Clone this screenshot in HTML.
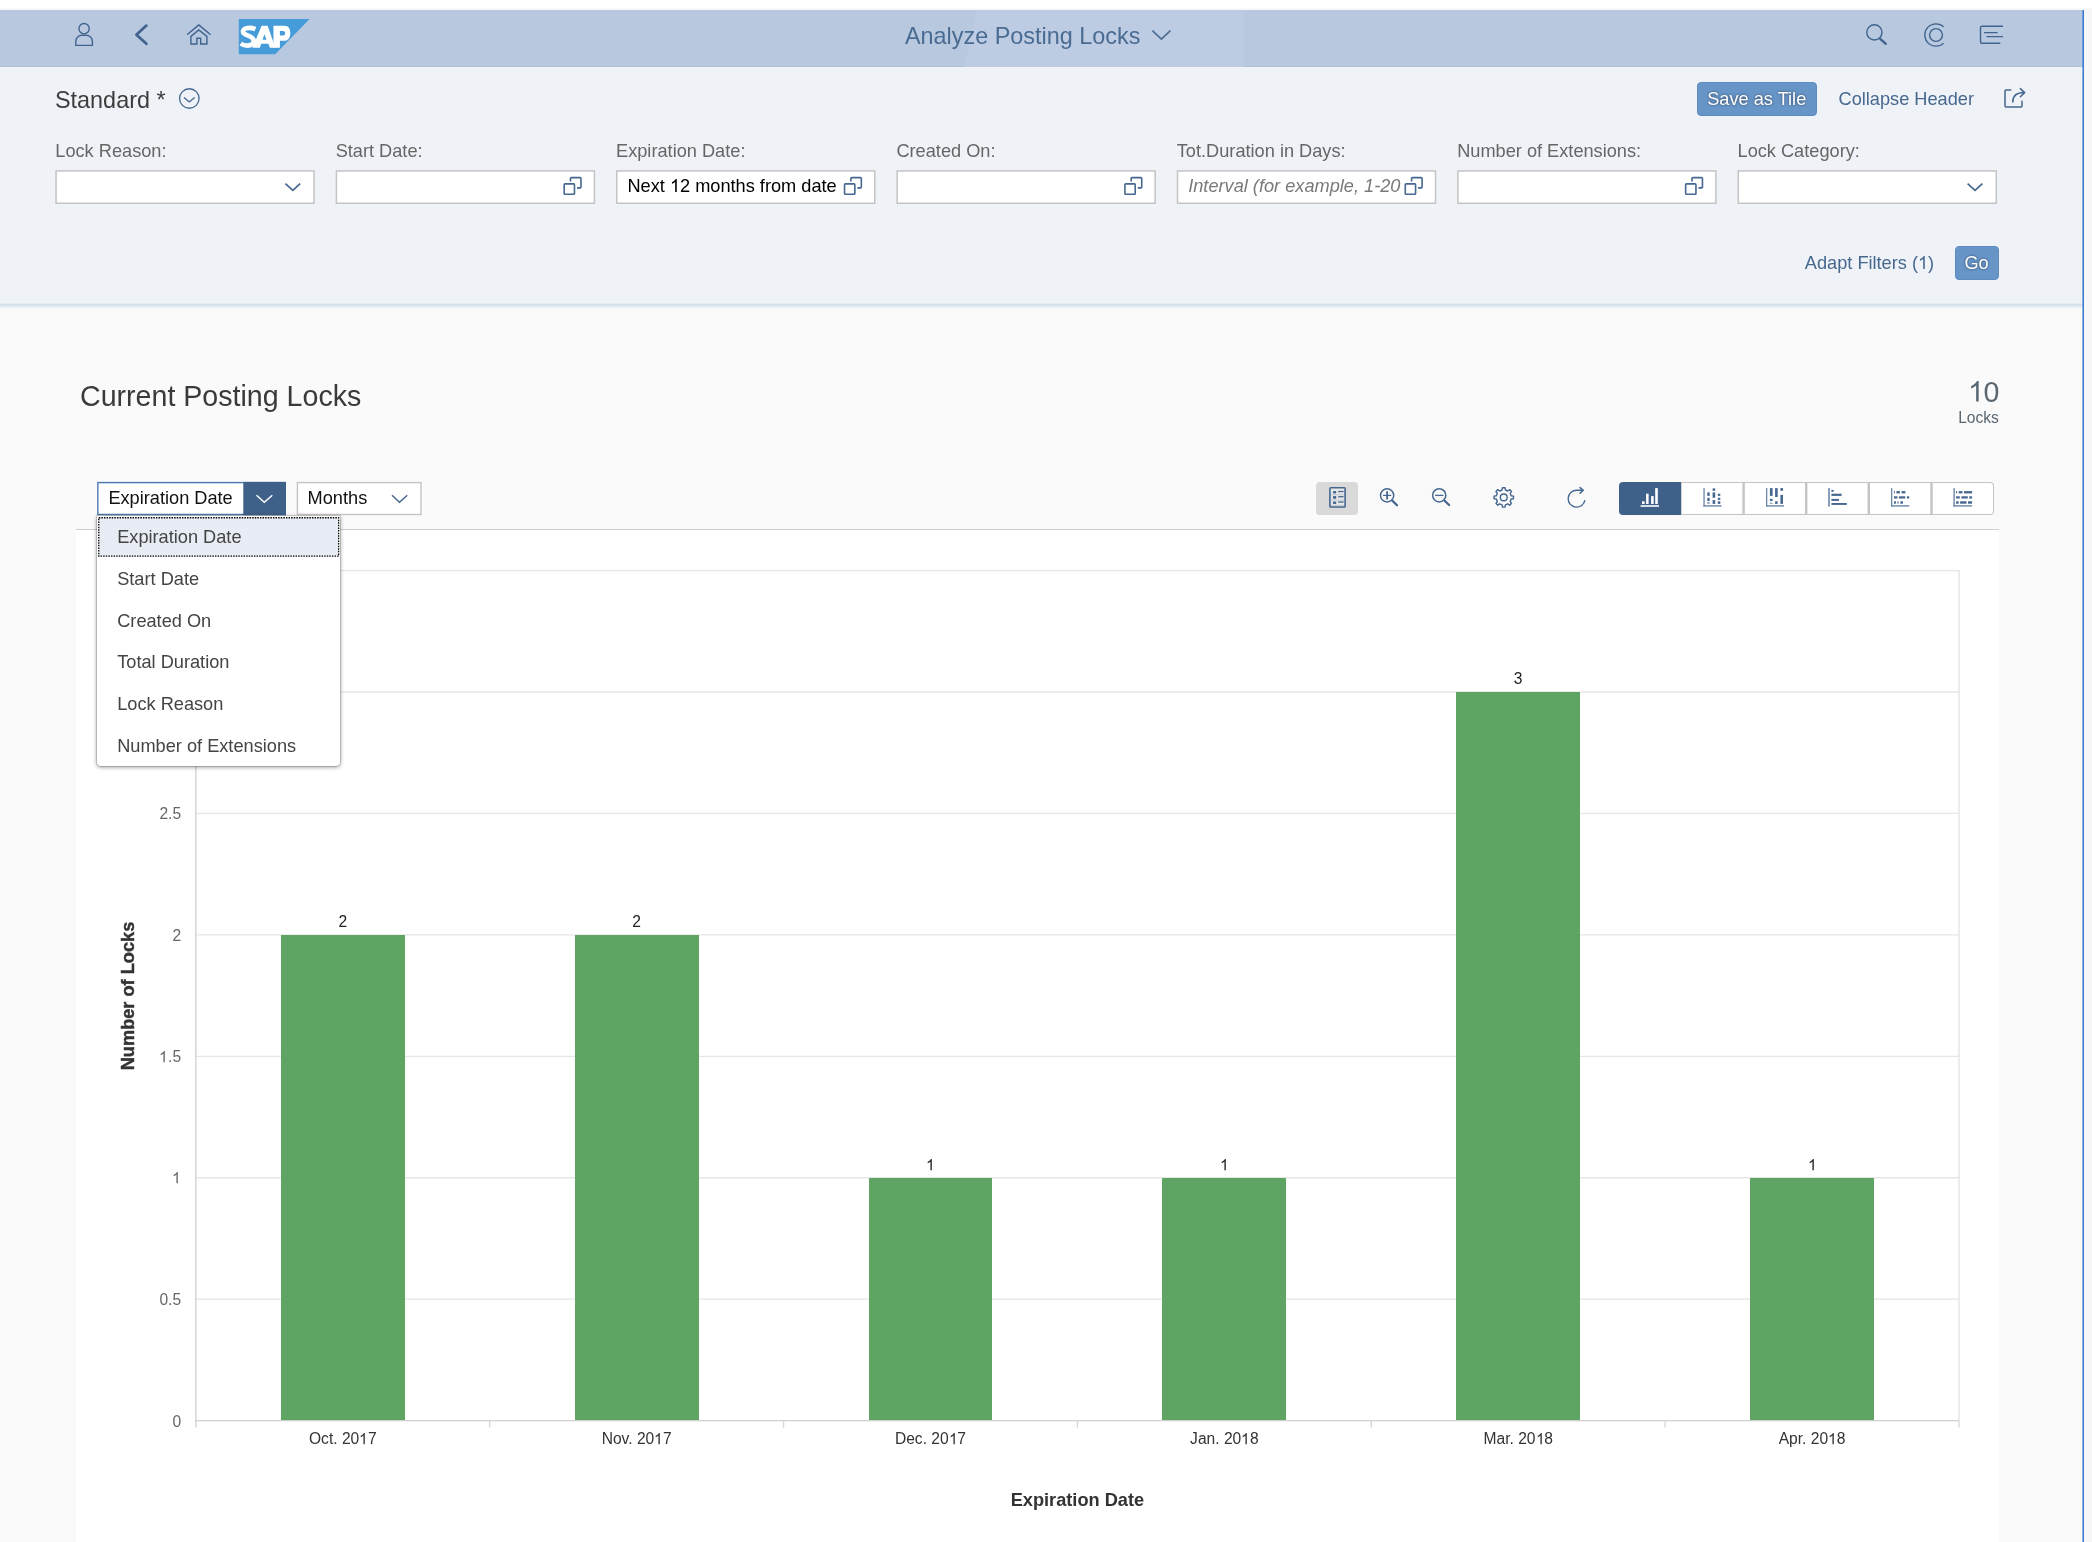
<!DOCTYPE html>
<html><head><meta charset="utf-8"><title>Analyze Posting Locks</title>
<style>
html,body{margin:0;padding:0;overflow:hidden;}
html{width:2092px;height:1542px;}
body{width:2092px;height:1542px;overflow:hidden;position:relative;background:#f7f7f7;font-family:"Liberation Sans", sans-serif;}
.t{position:absolute;white-space:nowrap;font-family:"Liberation Sans", sans-serif;}
.b{position:absolute;box-sizing:border-box;}
svg{overflow:visible;}
</style></head><body><div id="root" style="position:absolute;left:0;top:0;width:2092px;height:1542px;will-change:transform;overflow:hidden;">
<div class="b" style="left:0.00px;top:0.00px;width:2092.00px;height:10.00px;background:linear-gradient(#fff 0,#fff 7.5px,#f4f4f4 10px);"></div>
<div class="b" style="left:0.00px;top:10.00px;width:2083.00px;height:57.00px;background:#b7c8df;"></div>
<div class="b" style="left:0.00px;top:66.00px;width:2083.00px;height:1.00px;background:rgba(120,150,190,.18);"></div>
<div class="b" style="left:964.00px;top:10.00px;width:279.50px;height:57.00px;background:#bdcce2;clip-path:polygon(13px 0,100% 0,100% 100%,0 100%);"></div>
<div class="b" style="left:0.00px;top:67.00px;width:2083.00px;height:241.40px;background:#eff2f7;"></div>
<div class="b" style="left:0.00px;top:308.00px;width:2083.00px;height:1234.00px;background:linear-gradient(#eff2f7 0,#fafafa 1px);"></div>
<div class="b" style="left:0.00px;top:303.00px;width:2083.00px;height:4.00px;background:linear-gradient(rgba(213,224,237,0) 0,#d9e3ee 1px,#d5e0ed 2px,#dbe4ef 3px,rgba(213,224,237,0) 4px);"></div>
<div class="b" style="left:2084.00px;top:8.00px;width:8.00px;height:1534.00px;background:#f7f7f7;"></div>
<div class="b" style="left:2082.00px;top:10.00px;width:1.00px;height:1532.00px;background:rgba(59,122,211,.55);"></div>
<div class="b" style="left:2083.00px;top:10.00px;width:1.00px;height:1532.00px;background:#3b7ad3;"></div>
<div class="t" style="left:905.00px;top:25.00px;font-size:23.4px;line-height:23.4px;color:#4a6b92;font-weight:400;font-style:normal;">Analyze Posting Locks</div>
<div class="t" style="left:55.00px;top:89.00px;font-size:23.4px;line-height:23.4px;color:#3d3d3d;font-weight:400;font-style:normal;">Standard *</div>
<div class="b" style="left:1697.00px;top:81.70px;width:120.00px;height:33.90px;background:#6795c8;border:1px solid #5d8cc2;border-radius:4px;"></div>
<div class="t" style="left:1707.20px;top:90.00px;font-size:18.2px;line-height:18.2px;color:#fff;font-weight:400;font-style:normal;text-shadow:0 0 2.6px rgba(0,0,0,.6);">Save as Tile</div>
<div class="t" style="left:1838.50px;top:90.00px;font-size:18.2px;line-height:18.2px;color:#47688f;font-weight:400;font-style:normal;">Collapse Header</div>
<div class="t" style="left:55.30px;top:142.00px;font-size:18.2px;line-height:18.2px;color:#666666;font-weight:400;font-style:normal;">Lock Reason:</div>
<svg class="b" style="left:0;top:0" width="2092" height="300"><rect x="56.05" y="170.95" width="258" height="32.3" fill="#fff" stroke="#c4c4c4" stroke-width="1.5"/></svg>
<div class="t" style="left:335.67px;top:142.00px;font-size:18.2px;line-height:18.2px;color:#666666;font-weight:400;font-style:normal;">Start Date:</div>
<svg class="b" style="left:0;top:0" width="2092" height="300"><rect x="336.42" y="170.95" width="258" height="32.3" fill="#fff" stroke="#c4c4c4" stroke-width="1.5"/></svg>
<div class="t" style="left:616.04px;top:142.00px;font-size:18.2px;line-height:18.2px;color:#666666;font-weight:400;font-style:normal;">Expiration Date:</div>
<svg class="b" style="left:0;top:0" width="2092" height="300"><rect x="616.79" y="170.95" width="258" height="32.3" fill="#fff" stroke="#c4c4c4" stroke-width="1.5"/></svg>
<div class="t" style="left:896.41px;top:142.00px;font-size:18.2px;line-height:18.2px;color:#666666;font-weight:400;font-style:normal;">Created On:</div>
<svg class="b" style="left:0;top:0" width="2092" height="300"><rect x="897.16" y="170.95" width="258" height="32.3" fill="#fff" stroke="#c4c4c4" stroke-width="1.5"/></svg>
<div class="t" style="left:1176.78px;top:142.00px;font-size:18.2px;line-height:18.2px;color:#666666;font-weight:400;font-style:normal;">Tot.Duration in Days:</div>
<svg class="b" style="left:0;top:0" width="2092" height="300"><rect x="1177.53" y="170.95" width="258" height="32.3" fill="#fff" stroke="#c4c4c4" stroke-width="1.5"/></svg>
<div class="t" style="left:1457.15px;top:142.00px;font-size:18.2px;line-height:18.2px;color:#666666;font-weight:400;font-style:normal;">Number of Extensions:</div>
<svg class="b" style="left:0;top:0" width="2092" height="300"><rect x="1457.90" y="170.95" width="258" height="32.3" fill="#fff" stroke="#c4c4c4" stroke-width="1.5"/></svg>
<div class="t" style="left:1737.52px;top:142.00px;font-size:18.2px;line-height:18.2px;color:#666666;font-weight:400;font-style:normal;">Lock Category:</div>
<svg class="b" style="left:0;top:0" width="2092" height="300"><rect x="1738.27" y="170.95" width="258" height="32.3" fill="#fff" stroke="#c4c4c4" stroke-width="1.5"/></svg>
<div class="t" style="left:627.44px;top:177.00px;font-size:18.2px;line-height:18.2px;color:#000;font-weight:400;font-style:normal;">Next <svg style="display:inline-block;width:0.5562em;height:0.71875em;vertical-align:baseline;overflow:visible" viewBox="0 -1472 1139 1472"><path transform="scale(1,-1)" d="M763 0h-180v1147q-65 -62 -170.5 -124t-189.5 -93v174q151 71 264 172t160 196h116v-1472z" fill="currentColor"/></svg>2 months from date</div>
<div class="b" style="left:1188.18px;top:172px;width:212.8px;height:30px;overflow:hidden;"><div class="t" style="left:0;top:5px;font-size:18.2px;line-height:18.2px;color:#7a7a7a;font-style:italic;">Interval (for example, 1-200)</div></div>
<div class="t" style="left:1804.80px;top:254.00px;font-size:18.2px;line-height:18.2px;color:#47688f;font-weight:400;font-style:normal;">Adapt Filters (<svg style="display:inline-block;width:0.5562em;height:0.71875em;vertical-align:baseline;overflow:visible" viewBox="0 -1472 1139 1472"><path transform="scale(1,-1)" d="M763 0h-180v1147q-65 -62 -170.5 -124t-189.5 -93v174q151 71 264 172t160 196h116v-1472z" fill="currentColor"/></svg>)</div>
<div class="b" style="left:1955.00px;top:246.00px;width:44.20px;height:33.90px;background:#6795c8;border:1px solid #5d8cc2;border-radius:4px;"></div>
<div class="t" style="left:1964.40px;top:254.00px;font-size:18.2px;line-height:18.2px;color:#fff;font-weight:400;font-style:normal;text-shadow:0 0 2.6px rgba(0,0,0,.6);">Go</div>
<div class="t" style="left:80.00px;top:382.00px;font-size:28.6px;line-height:28.6px;color:#3a3a3a;font-weight:400;font-style:normal;">Current Posting Locks</div>
<div class="t" style="right:92.60px;top:378.00px;font-size:28.6px;line-height:28.6px;color:#5a6670;font-weight:400;font-style:normal;"><svg style="display:inline-block;width:0.5562em;height:0.71875em;vertical-align:baseline;overflow:visible" viewBox="0 -1472 1139 1472"><path transform="scale(1,-1)" d="M763 0h-180v1147q-65 -62 -170.5 -124t-189.5 -93v174q151 71 264 172t160 196h116v-1472z" fill="currentColor"/></svg>0</div>
<div class="t" style="right:93.10px;top:410.00px;font-size:15.6px;line-height:15.6px;color:#5a6670;font-weight:400;font-style:normal;">Locks</div>
<div class="b" style="left:76.00px;top:528.60px;width:1923.00px;height:1014.00px;background:#fff;border-top:1.3px solid #cfcfcf;"></div>
<svg class="b" style="left:0;top:0" width="2092" height="1542" viewBox="0 0 2092 1542"><line x1="195.85" y1="1299.17" x2="1959.00" y2="1299.17" stroke="#e6e6e6" stroke-width="1.3"/><line x1="195.85" y1="1177.74" x2="1959.00" y2="1177.74" stroke="#e6e6e6" stroke-width="1.3"/><line x1="195.85" y1="1056.31" x2="1959.00" y2="1056.31" stroke="#e6e6e6" stroke-width="1.3"/><line x1="195.85" y1="934.88" x2="1959.00" y2="934.88" stroke="#e6e6e6" stroke-width="1.3"/><line x1="195.85" y1="813.45" x2="1959.00" y2="813.45" stroke="#e6e6e6" stroke-width="1.3"/><line x1="195.85" y1="692.02" x2="1959.00" y2="692.02" stroke="#e6e6e6" stroke-width="1.3"/><line x1="195.85" y1="570.59" x2="1959.00" y2="570.59" stroke="#e6e6e6" stroke-width="1.3"/><line x1="1959.00" y1="569.94" x2="1959.00" y2="1420.60" stroke="#e2e2e2" stroke-width="1.3"/><line x1="195.85" y1="569.94" x2="195.85" y2="1427.60" stroke="#d0d0d0" stroke-width="1.3"/><line x1="195.85" y1="1420.60" x2="1959.00" y2="1420.60" stroke="#d0d0d0" stroke-width="1.3"/><line x1="489.71" y1="1420.60" x2="489.71" y2="1427.60" stroke="#d6d6d6" stroke-width="1.3"/><line x1="783.57" y1="1420.60" x2="783.57" y2="1427.60" stroke="#d6d6d6" stroke-width="1.3"/><line x1="1077.42" y1="1420.60" x2="1077.42" y2="1427.60" stroke="#d6d6d6" stroke-width="1.3"/><line x1="1371.28" y1="1420.60" x2="1371.28" y2="1427.60" stroke="#d6d6d6" stroke-width="1.3"/><line x1="1665.14" y1="1420.60" x2="1665.14" y2="1427.60" stroke="#d6d6d6" stroke-width="1.3"/><line x1="1959.00" y1="1420.60" x2="1959.00" y2="1427.60" stroke="#d6d6d6" stroke-width="1.3"/></svg>
<div class="t" style="right:1910.90px;top:1414.00px;font-size:15.6px;line-height:15.6px;color:#666;font-weight:400;font-style:normal;">0</div>
<div class="t" style="right:1910.90px;top:1292.00px;font-size:15.6px;line-height:15.6px;color:#666;font-weight:400;font-style:normal;">0.5</div>
<div class="t" style="right:1910.90px;top:1170.00px;font-size:15.6px;line-height:15.6px;color:#666;font-weight:400;font-style:normal;"><svg style="display:inline-block;width:0.5562em;height:0.71875em;vertical-align:baseline;overflow:visible" viewBox="0 -1472 1139 1472"><path transform="scale(1,-1)" d="M763 0h-180v1147q-65 -62 -170.5 -124t-189.5 -93v174q151 71 264 172t160 196h116v-1472z" fill="currentColor"/></svg></div>
<div class="t" style="right:1910.90px;top:1049.00px;font-size:15.6px;line-height:15.6px;color:#666;font-weight:400;font-style:normal;"><svg style="display:inline-block;width:0.5562em;height:0.71875em;vertical-align:baseline;overflow:visible" viewBox="0 -1472 1139 1472"><path transform="scale(1,-1)" d="M763 0h-180v1147q-65 -62 -170.5 -124t-189.5 -93v174q151 71 264 172t160 196h116v-1472z" fill="currentColor"/></svg>.5</div>
<div class="t" style="right:1910.90px;top:928.00px;font-size:15.6px;line-height:15.6px;color:#666;font-weight:400;font-style:normal;">2</div>
<div class="t" style="right:1910.90px;top:806.00px;font-size:15.6px;line-height:15.6px;color:#666;font-weight:400;font-style:normal;">2.5</div>
<div class="b" style="left:280.83px;top:935.28px;width:123.90px;height:484.67px;background:#5ea463;"></div>
<div class="t" style="left:-157.22px;width:1000px;text-align:center;top:914.00px;font-size:15.6px;line-height:15.6px;color:#222;font-weight:400;font-style:normal;">2</div>
<div class="t" style="left:-157.22px;width:1000px;text-align:center;top:1431.00px;font-size:15.6px;line-height:15.6px;color:#333;font-weight:400;font-style:normal;">Oct. 20<svg style="display:inline-block;width:0.5562em;height:0.71875em;vertical-align:baseline;overflow:visible" viewBox="0 -1472 1139 1472"><path transform="scale(1,-1)" d="M763 0h-180v1147q-65 -62 -170.5 -124t-189.5 -93v174q151 71 264 172t160 196h116v-1472z" fill="currentColor"/></svg>7</div>
<div class="b" style="left:574.69px;top:935.28px;width:123.90px;height:484.67px;background:#5ea463;"></div>
<div class="t" style="left:136.64px;width:1000px;text-align:center;top:914.00px;font-size:15.6px;line-height:15.6px;color:#222;font-weight:400;font-style:normal;">2</div>
<div class="t" style="left:136.64px;width:1000px;text-align:center;top:1431.00px;font-size:15.6px;line-height:15.6px;color:#333;font-weight:400;font-style:normal;">Nov. 20<svg style="display:inline-block;width:0.5562em;height:0.71875em;vertical-align:baseline;overflow:visible" viewBox="0 -1472 1139 1472"><path transform="scale(1,-1)" d="M763 0h-180v1147q-65 -62 -170.5 -124t-189.5 -93v174q151 71 264 172t160 196h116v-1472z" fill="currentColor"/></svg>7</div>
<div class="b" style="left:868.55px;top:1178.14px;width:123.90px;height:241.81px;background:#5ea463;"></div>
<div class="t" style="left:430.50px;width:1000px;text-align:center;top:1157.00px;font-size:15.6px;line-height:15.6px;color:#222;font-weight:400;font-style:normal;"><svg style="display:inline-block;width:0.5562em;height:0.71875em;vertical-align:baseline;overflow:visible" viewBox="0 -1472 1139 1472"><path transform="scale(1,-1)" d="M763 0h-180v1147q-65 -62 -170.5 -124t-189.5 -93v174q151 71 264 172t160 196h116v-1472z" fill="currentColor"/></svg></div>
<div class="t" style="left:430.50px;width:1000px;text-align:center;top:1431.00px;font-size:15.6px;line-height:15.6px;color:#333;font-weight:400;font-style:normal;">Dec. 20<svg style="display:inline-block;width:0.5562em;height:0.71875em;vertical-align:baseline;overflow:visible" viewBox="0 -1472 1139 1472"><path transform="scale(1,-1)" d="M763 0h-180v1147q-65 -62 -170.5 -124t-189.5 -93v174q151 71 264 172t160 196h116v-1472z" fill="currentColor"/></svg>7</div>
<div class="b" style="left:1162.40px;top:1178.14px;width:123.90px;height:241.81px;background:#5ea463;"></div>
<div class="t" style="left:724.35px;width:1000px;text-align:center;top:1157.00px;font-size:15.6px;line-height:15.6px;color:#222;font-weight:400;font-style:normal;"><svg style="display:inline-block;width:0.5562em;height:0.71875em;vertical-align:baseline;overflow:visible" viewBox="0 -1472 1139 1472"><path transform="scale(1,-1)" d="M763 0h-180v1147q-65 -62 -170.5 -124t-189.5 -93v174q151 71 264 172t160 196h116v-1472z" fill="currentColor"/></svg></div>
<div class="t" style="left:724.35px;width:1000px;text-align:center;top:1431.00px;font-size:15.6px;line-height:15.6px;color:#333;font-weight:400;font-style:normal;">Jan. 20<svg style="display:inline-block;width:0.5562em;height:0.71875em;vertical-align:baseline;overflow:visible" viewBox="0 -1472 1139 1472"><path transform="scale(1,-1)" d="M763 0h-180v1147q-65 -62 -170.5 -124t-189.5 -93v174q151 71 264 172t160 196h116v-1472z" fill="currentColor"/></svg>8</div>
<div class="b" style="left:1456.26px;top:692.42px;width:123.90px;height:727.53px;background:#5ea463;"></div>
<div class="t" style="left:1018.21px;width:1000px;text-align:center;top:671.00px;font-size:15.6px;line-height:15.6px;color:#222;font-weight:400;font-style:normal;">3</div>
<div class="t" style="left:1018.21px;width:1000px;text-align:center;top:1431.00px;font-size:15.6px;line-height:15.6px;color:#333;font-weight:400;font-style:normal;">Mar. 20<svg style="display:inline-block;width:0.5562em;height:0.71875em;vertical-align:baseline;overflow:visible" viewBox="0 -1472 1139 1472"><path transform="scale(1,-1)" d="M763 0h-180v1147q-65 -62 -170.5 -124t-189.5 -93v174q151 71 264 172t160 196h116v-1472z" fill="currentColor"/></svg>8</div>
<div class="b" style="left:1750.12px;top:1178.14px;width:123.90px;height:241.81px;background:#5ea463;"></div>
<div class="t" style="left:1312.07px;width:1000px;text-align:center;top:1157.00px;font-size:15.6px;line-height:15.6px;color:#222;font-weight:400;font-style:normal;"><svg style="display:inline-block;width:0.5562em;height:0.71875em;vertical-align:baseline;overflow:visible" viewBox="0 -1472 1139 1472"><path transform="scale(1,-1)" d="M763 0h-180v1147q-65 -62 -170.5 -124t-189.5 -93v174q151 71 264 172t160 196h116v-1472z" fill="currentColor"/></svg></div>
<div class="t" style="left:1312.07px;width:1000px;text-align:center;top:1431.00px;font-size:15.6px;line-height:15.6px;color:#333;font-weight:400;font-style:normal;">Apr. 20<svg style="display:inline-block;width:0.5562em;height:0.71875em;vertical-align:baseline;overflow:visible" viewBox="0 -1472 1139 1472"><path transform="scale(1,-1)" d="M763 0h-180v1147q-65 -62 -170.5 -124t-189.5 -93v174q151 71 264 172t160 196h116v-1472z" fill="currentColor"/></svg>8</div>
<div class="t" style="left:577.42px;width:1000px;text-align:center;top:1491.00px;font-size:18.2px;line-height:18.2px;color:#333;font-weight:700;font-style:normal;">Expiration Date</div>
<div class="t" style="left:-366.00px;top:995.50px;width:1000px;height:0;"><div style="position:absolute;left:500px;top:0;transform:rotate(-90deg);transform-origin:0 0;"><div class="t" style="left:-500px;width:1000px;text-align:center;top:-15.41px;font-size:18.2px;line-height:18.2px;font-weight:700;color:#333;-webkit-text-stroke:0.45px #333;">Number of Locks</div></div></div>
<svg class="b" style="left:0;top:0" width="2092" height="600"><rect x="97.85" y="482.6" width="187.4" height="31.9" fill="#fff" stroke="#4a78b0" stroke-width="1.4"/></svg>
<svg class="b" style="left:0;top:0" width="2092" height="600"><rect x="243.3" y="481.9" width="42.65" height="33.3" fill="#3f6089"/></svg>
<div class="t" style="left:108.40px;top:489.00px;font-size:18.2px;line-height:18.2px;color:#111;font-weight:400;font-style:normal;">Expiration Date</div>
<svg class="b" style="left:0;top:0" width="2092" height="600"><rect x="297.4" y="482.6" width="123.6" height="31.9" fill="#fff" stroke="#c4c4c4" stroke-width="1.4"/></svg>
<div class="t" style="left:307.60px;top:489.00px;font-size:18.2px;line-height:18.2px;color:#111;font-weight:400;font-style:normal;">Months</div>
<div class="b" style="left:1316.30px;top:482.00px;width:41.40px;height:32.80px;background:#d9d9d9;border-radius:4px;"></div>
<div class="b" style="left:1680.00px;top:482.00px;width:313.60px;height:33.40px;background:#fff;border:1.3px solid #c4c4c4;border-left:none;border-radius:0 4px 4px 0;"></div>
<div class="b" style="left:1618.60px;top:482.00px;width:62.60px;height:33.40px;background:#3f6089;border-radius:4px 0 0 4px;"></div>
<div class="b" style="left:1681.00px;top:483.00px;width:1.30px;height:31.40px;background:#d2d2d2;"></div>
<svg class="b" style="left:0;top:0" width="2092" height="600"><rect x="1742.40" y="482.6" width="2.4" height="32.2" fill="#c4c4c4"/></svg>
<svg class="b" style="left:0;top:0" width="2092" height="600"><rect x="1805.00" y="482.6" width="2.4" height="32.2" fill="#c4c4c4"/></svg>
<svg class="b" style="left:0;top:0" width="2092" height="600"><rect x="1867.60" y="482.6" width="2.4" height="32.2" fill="#c4c4c4"/></svg>
<svg class="b" style="left:0;top:0" width="2092" height="600"><rect x="1930.30" y="482.6" width="2.4" height="32.2" fill="#c4c4c4"/></svg>
<div class="b" style="left:97.00px;top:516.20px;width:243.40px;height:249.60px;background:#fff;border-radius:0 0 4px 4px;box-shadow:0 1px 4px rgba(0,0,0,.45), 0 0 0 1px rgba(0,0,0,.12);"></div>
<div class="b" style="left:98.60px;top:517.60px;width:240.20px;height:38.60px;background:#e8ecf5;"></div>
<div class="t" style="left:117.20px;top:528.00px;font-size:18.2px;line-height:18.2px;color:#444;font-weight:400;font-style:normal;">Expiration Date</div>
<div class="t" style="left:117.20px;top:570.00px;font-size:18.2px;line-height:18.2px;color:#444;font-weight:400;font-style:normal;">Start Date</div>
<div class="t" style="left:117.20px;top:612.00px;font-size:18.2px;line-height:18.2px;color:#444;font-weight:400;font-style:normal;">Created On</div>
<div class="t" style="left:117.20px;top:653.00px;font-size:18.2px;line-height:18.2px;color:#444;font-weight:400;font-style:normal;">Total Duration</div>
<div class="t" style="left:117.20px;top:695.00px;font-size:18.2px;line-height:18.2px;color:#444;font-weight:400;font-style:normal;">Lock Reason</div>
<div class="t" style="left:117.20px;top:737.00px;font-size:18.2px;line-height:18.2px;color:#444;font-weight:400;font-style:normal;">Number of Extensions</div>
<svg class="b" style="left:0;top:0;pointer-events:none" width="2092" height="1542" viewBox="0 0 2092 1542"><circle cx="84.1" cy="28.7" r="5.15" stroke="#41638d" stroke-width="1.4" fill="none"/><path d="M75.8,45.4 V41.5 C75.8,37.6 78.8,35.3 82,35.3 H86.2 C89.4,35.3 92.4,37.6 92.4,41.5 V45.4 Z" stroke="#41638d" stroke-width="1.4" fill="none" stroke-linecap="round" stroke-linejoin="round" /><path d="M146.4,25.6 L136.4,34.8 L146.4,43.8" stroke="#41638d" stroke-width="2.7" fill="none" stroke-linecap="round" stroke-linejoin="round" /><path d="M187.6,34.3 L198.8,24.9 L210,34.3" stroke="#41638d" stroke-width="1.4" fill="none" stroke-linecap="round" stroke-linejoin="round" /><path d="M190.9,36 V44 H196.9 V38.3 H200.7 V44 H206.9 V36 M190.9,36.4 L198.8,29.9 L206.9,36.4" stroke="#41638d" stroke-width="1.4" fill="none" stroke-linecap="butt" stroke-linejoin="miter" /><polygon points="238.8,19.1 309.6,19.1 275.2,54.2 238.8,54.2" fill="#459cd8"/><g transform="translate(230,14) scale(0.043022)" fill="#fff"><path d="M590,350 C510,318 420,318 370,335 C290,362 285,430 335,462 C395,500 515,522 545,592 C575,680 490,735 405,735 C340,735 295,718 250,688" fill="none" stroke="#fff" stroke-width="108"/><path fill-rule="evenodd" d="M735,275 H875 L1055,785 H925 L893,690 H727 L692,785 H520 Z M800,468 L757,598 H848 Z"/><path fill-rule="evenodd" d="M1010,275 H1270 C1360,275 1402,350 1402,445 C1402,545 1350,620 1270,620 H1160 V785 H1010 Z M1160,398 V502 H1235 C1265,502 1282,480 1282,450 C1282,420 1265,398 1235,398 Z"/></g><path d="M1152.4,30.6 L1161.4,39.2 L1170.4,30.6" stroke="#4a6b92" stroke-width="1.6" fill="none" stroke-linecap="butt" stroke-linejoin="miter" /><circle cx="1874.4" cy="32.4" r="7.6" stroke="#41638d" stroke-width="1.4" fill="none"/><path d="M1880.2,38.8 L1885.8,43.8" stroke="#41638d" stroke-width="2.3" fill="none" stroke-linecap="round" stroke-linejoin="round" /><circle cx="1936" cy="35" r="6.4" stroke="#41638d" stroke-width="1.4" fill="none"/><path d="M1943.7,26.9 A11.2,11.2 0 1 0 1943.7,43.1" stroke="#41638d" stroke-width="1.3" fill="none" stroke-linecap="butt" stroke-linejoin="round" /><path d="M2003,26.2 H1982 Q1980.5,26.2 1980.5,27.7 V41.8 Q1980.5,43.3 1982,43.3 H2000.3" stroke="#41638d" stroke-width="1.4" fill="none" stroke-linecap="butt" stroke-linejoin="round" /><path d="M1984,32.6 H1997.6 M1986.6,36.6 H2003" stroke="#41638d" stroke-width="1.3" fill="none" stroke-linecap="butt" stroke-linejoin="round" /><circle cx="189.3" cy="98.5" r="9.75" stroke="#456790" stroke-width="1.3" fill="none"/><path d="M184.3,97.8 L189.3,101.9 L194.3,97.8" stroke="#456790" stroke-width="1.3" fill="none" stroke-linecap="round" stroke-linejoin="round" /><path d="M2010.8,90.1 H2006 Q2005,90.1 2005,91.1 V106.1 Q2005,107.1 2006,107.1 H2021 Q2022,107.1 2022,106.1 V101.3" stroke="#456790" stroke-width="1.5" fill="none" stroke-linecap="round" stroke-linejoin="round" /><path d="M2012.8,102 C2012.8,96 2016.5,92.6 2024,92.6 M2020.4,88.6 L2024.6,92.6 L2020.4,96.8" stroke="#456790" stroke-width="1.5" fill="none" stroke-linecap="round" stroke-linejoin="round" /><path d="M285.40,183.7 L292.80,190.3 L300.20,183.7" stroke="#456790" stroke-width="1.7" fill="none" stroke-linecap="butt" stroke-linejoin="miter" /><rect x="564.17" y="183.9" width="10.3" height="10.3" rx="0.8" stroke="#456790" stroke-width="1.6" fill="none"/><path d="M570.47,181.6 V178.40 Q570.47,177.6 571.27,177.6 H580.17 Q580.97,177.6 580.97,178.4 V187.1 Q580.97,187.9 580.17,187.9 H576.97" stroke="#456790" stroke-width="1.6" fill="none" stroke-linecap="butt" stroke-linejoin="round" /><rect x="844.54" y="183.9" width="10.3" height="10.3" rx="0.8" stroke="#456790" stroke-width="1.6" fill="none"/><path d="M850.84,181.6 V178.40 Q850.84,177.6 851.64,177.6 H860.54 Q861.34,177.6 861.34,178.4 V187.1 Q861.34,187.9 860.54,187.9 H857.34" stroke="#456790" stroke-width="1.6" fill="none" stroke-linecap="butt" stroke-linejoin="round" /><rect x="1124.91" y="183.9" width="10.3" height="10.3" rx="0.8" stroke="#456790" stroke-width="1.6" fill="none"/><path d="M1131.21,181.6 V178.40 Q1131.21,177.6 1132.01,177.6 H1140.91 Q1141.71,177.6 1141.71,178.4 V187.1 Q1141.71,187.9 1140.91,187.9 H1137.71" stroke="#456790" stroke-width="1.6" fill="none" stroke-linecap="butt" stroke-linejoin="round" /><rect x="1405.28" y="183.9" width="10.3" height="10.3" rx="0.8" stroke="#456790" stroke-width="1.6" fill="none"/><path d="M1411.58,181.6 V178.40 Q1411.58,177.6 1412.38,177.6 H1421.28 Q1422.08,177.6 1422.08,178.4 V187.1 Q1422.08,187.9 1421.28,187.9 H1418.08" stroke="#456790" stroke-width="1.6" fill="none" stroke-linecap="butt" stroke-linejoin="round" /><rect x="1685.65" y="183.9" width="10.3" height="10.3" rx="0.8" stroke="#456790" stroke-width="1.6" fill="none"/><path d="M1691.95,181.6 V178.40 Q1691.95,177.6 1692.75,177.6 H1701.65 Q1702.45,177.6 1702.45,178.4 V187.1 Q1702.45,187.9 1701.65,187.9 H1698.45" stroke="#456790" stroke-width="1.6" fill="none" stroke-linecap="butt" stroke-linejoin="round" /><path d="M1967.62,183.7 L1975.02,190.3 L1982.42,183.7" stroke="#456790" stroke-width="1.7" fill="none" stroke-linecap="butt" stroke-linejoin="miter" /><path d="M256.5,495.3 L264.3,502.2 L272.3,495.3" stroke="#fff" stroke-width="1.5" fill="none" stroke-linecap="butt" stroke-linejoin="miter" /><path d="M392,495.3 L399.5,502.2 L407.3,495.3" stroke="#456790" stroke-width="1.5" fill="none" stroke-linecap="butt" stroke-linejoin="miter" /><rect x="1329.9" y="487.8" width="15.2" height="19.2" rx="0.8" stroke="#456790" stroke-width="1.6" fill="rgba(255,255,255,.4)"/><rect x="1332.9" y="490.90" width="3.4" height="2.6" rx="1" fill="#456790"/><rect x="1338.2" y="490.90" width="5.4" height="1.3" fill="#456790"/><rect x="1332.9" y="496.10" width="3.4" height="2.6" rx="1" fill="#456790"/><rect x="1338.2" y="496.10" width="5.4" height="1.3" fill="#456790"/><rect x="1332.9" y="501.40" width="3.4" height="2.6" rx="1" fill="#456790"/><rect x="1338.2" y="501.40" width="5.4" height="1.3" fill="#456790"/><rect x="1331" y="494.30" width="13" height="1" fill="#456790" opacity="0.25"/><rect x="1331" y="499.60" width="13" height="1" fill="#456790" opacity="0.25"/><rect x="1331" y="504.80" width="13" height="1" fill="#456790" opacity="0.25"/><circle cx="1387.1" cy="495.4" r="6.6" stroke="#456790" stroke-width="1.5" fill="none"/><path d="M1383,495.4 H1391.2" stroke="#456790" stroke-width="1.2" fill="none" stroke-linecap="butt" stroke-linejoin="round" /><path d="M1387.1,491.2 V499.6" stroke="#456790" stroke-width="1.8" fill="none" stroke-linecap="butt" stroke-linejoin="round" /><path d="M1392.3,500.6 L1397,505.2" stroke="#456790" stroke-width="2.3" fill="none" stroke-linecap="round" stroke-linejoin="round" /><circle cx="1439.2" cy="495.3" r="6.6" stroke="#456790" stroke-width="1.5" fill="none"/><path d="M1435.1,495.4 H1443.4" stroke="#456790" stroke-width="1.3" fill="none" stroke-linecap="butt" stroke-linejoin="round" /><path d="M1444.4,500.5 L1449.1,505" stroke="#456790" stroke-width="2.3" fill="none" stroke-linecap="round" stroke-linejoin="round" /><path d="M1502.09,489.98 L1502.45,487.69 L1505.05,487.69 L1505.41,489.98 L1507.82,490.98 L1509.70,489.61 L1511.54,491.45 L1510.17,493.33 L1511.17,495.74 L1513.46,496.10 L1513.46,498.70 L1511.17,499.06 L1510.17,501.47 L1511.54,503.35 L1509.70,505.19 L1507.82,503.82 L1505.41,504.82 L1505.05,507.11 L1502.45,507.11 L1502.09,504.82 L1499.68,503.82 L1497.80,505.19 L1495.96,503.35 L1497.33,501.47 L1496.33,499.06 L1494.04,498.70 L1494.04,496.10 L1496.33,495.74 L1497.33,493.33 L1495.96,491.45 L1497.80,489.61 L1499.68,490.98 Z" stroke="#456790" stroke-width="1.4" fill="none" stroke-linecap="round" stroke-linejoin="round" /><circle cx="1503.75" cy="497.4" r="3.4" stroke="#456790" stroke-width="1.4" fill="none"/><path d="M1584.92,500.17 A8.45,8.45 0 1 1 1576.60,490.25 H1583" stroke="#456790" stroke-width="1.35" fill="none" stroke-linecap="butt" stroke-linejoin="round" /><path d="M1580.1,487.6 L1583.3,490.3 L1580.1,493.1" stroke="#456790" stroke-width="1.5" fill="none" stroke-linecap="round" stroke-linejoin="round" /><rect x="1640.60" y="505.20" width="18.40" height="1.60" fill="#fff" opacity="1"/><rect x="1642.00" y="501.30" width="2.60" height="2.70" fill="#fff" opacity="1"/><rect x="1646.10" y="493.70" width="2.50" height="10.30" fill="#fff" opacity="1"/><rect x="1651.10" y="496.10" width="2.60" height="7.90" fill="#fff" opacity="1"/><rect x="1655.20" y="488.10" width="2.60" height="15.90" fill="#fff" opacity="1"/><rect x="1703.40" y="488.10" width="1.30" height="18.50" fill="#6a87ab" opacity="1"/><rect x="1703.40" y="505.20" width="18.20" height="1.40" fill="#6a87ab" opacity="1"/><rect x="1707.30" y="492.40" width="2.40" height="3.50" fill="#456790" opacity="1"/><rect x="1707.30" y="497.80" width="2.40" height="3.20" fill="#456790" opacity="1"/><rect x="1707.30" y="502.00" width="2.40" height="1.90" fill="#456790" opacity="0.6"/><rect x="1712.60" y="488.40" width="2.60" height="2.40" fill="#456790" opacity="1"/><rect x="1712.60" y="492.40" width="2.60" height="5.40" fill="#456790" opacity="1"/><rect x="1712.60" y="500.10" width="2.60" height="3.80" fill="#456790" opacity="1"/><rect x="1717.80" y="493.70" width="2.50" height="2.20" fill="#456790" opacity="1"/><rect x="1717.80" y="497.80" width="2.50" height="2.10" fill="#456790" opacity="1"/><rect x="1717.80" y="501.30" width="2.50" height="2.60" fill="#456790" opacity="1"/><rect x="1766.00" y="488.10" width="1.30" height="18.50" fill="#6a87ab" opacity="1"/><rect x="1766.00" y="505.20" width="18.00" height="1.40" fill="#6a87ab" opacity="1"/><rect x="1769.90" y="488.10" width="2.70" height="7.80" fill="#456790" opacity="1"/><rect x="1769.90" y="498.90" width="2.70" height="2.10" fill="#456790" opacity="1"/><rect x="1769.90" y="502.60" width="2.70" height="1.30" fill="#456790" opacity="0.6"/><rect x="1775.10" y="488.10" width="2.60" height="8.90" fill="#456790" opacity="1"/><rect x="1775.10" y="501.30" width="2.60" height="2.60" fill="#456790" opacity="1"/><rect x="1780.40" y="488.10" width="2.60" height="2.70" fill="#456790" opacity="1"/><rect x="1780.40" y="494.90" width="2.60" height="9.00" fill="#456790" opacity="1"/><rect x="1828.20" y="488.10" width="1.60" height="18.50" fill="#6a87ab" opacity="1"/><rect x="1831.40" y="489.90" width="2.30" height="1.90" fill="#456790" opacity="1"/><rect x="1831.40" y="493.70" width="10.20" height="2.20" fill="#456790" opacity="1"/><rect x="1831.40" y="498.90" width="7.60" height="2.00" fill="#456790" opacity="1"/><rect x="1831.40" y="503.00" width="15.40" height="1.90" fill="#456790" opacity="1"/><rect x="1891.00" y="488.10" width="1.30" height="18.50" fill="#6a87ab" opacity="1"/><rect x="1891.00" y="505.20" width="18.20" height="1.40" fill="#6a87ab" opacity="1"/><rect x="1894.00" y="491.10" width="0.90" height="2.30" fill="#456790" opacity="1"/><rect x="1896.40" y="491.10" width="3.50" height="2.30" fill="#456790" opacity="1"/><rect x="1901.60" y="491.10" width="3.80" height="2.30" fill="#456790" opacity="1"/><rect x="1894.00" y="496.30" width="3.50" height="2.20" fill="#456790" opacity="1"/><rect x="1898.90" y="496.30" width="6.30" height="2.20" fill="#456790" opacity="1"/><rect x="1906.90" y="496.30" width="2.30" height="2.20" fill="#456790" opacity="1"/><rect x="1894.00" y="501.30" width="1.90" height="2.40" fill="#456790" opacity="1"/><rect x="1897.50" y="501.30" width="1.00" height="2.40" fill="#456790" opacity="1"/><rect x="1900.40" y="501.30" width="2.60" height="2.40" fill="#456790" opacity="1"/><rect x="1953.40" y="488.10" width="1.40" height="18.50" fill="#6a87ab" opacity="1"/><rect x="1953.40" y="505.20" width="18.70" height="1.40" fill="#6a87ab" opacity="1"/><rect x="1956.10" y="491.10" width="1.00" height="2.30" fill="#456790" opacity="1"/><rect x="1958.70" y="491.10" width="3.80" height="2.30" fill="#456790" opacity="1"/><rect x="1964.00" y="491.10" width="8.10" height="2.30" fill="#456790" opacity="1"/><rect x="1956.10" y="496.30" width="3.70" height="2.20" fill="#456790" opacity="1"/><rect x="1961.40" y="496.30" width="6.40" height="2.20" fill="#456790" opacity="1"/><rect x="1969.20" y="496.30" width="2.90" height="2.20" fill="#456790" opacity="1"/><rect x="1956.10" y="501.30" width="2.60" height="2.40" fill="#456790" opacity="1"/><rect x="1960.10" y="501.30" width="6.40" height="2.40" fill="#456790" opacity="1"/><rect x="1968.00" y="501.30" width="4.10" height="2.40" fill="#456790" opacity="1"/><rect x="98.75" y="517.75" width="239.9" height="38.3" fill="none" stroke="#000" stroke-width="1.3" stroke-dasharray="1.5 1.1"/></svg>
</div></body></html>
